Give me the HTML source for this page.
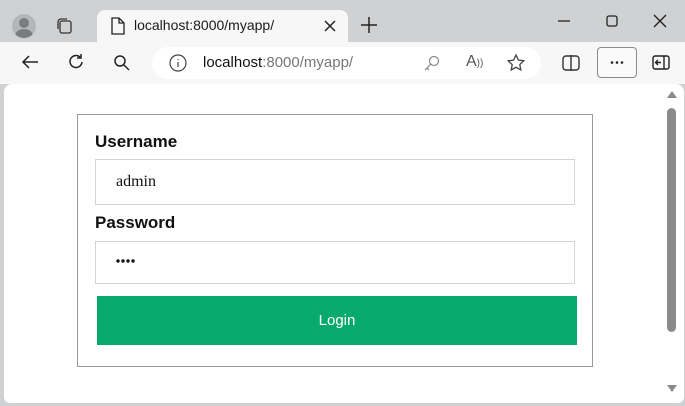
<!DOCTYPE html><html><head><style>
body{margin:0;width:685px;height:406px;overflow:hidden;background:#cfd1d2;font-family:"Liberation Sans",sans-serif;position:relative}
.a{position:absolute}
svg{position:absolute;overflow:visible}
</style></head><body>
<div class="a" style="left:0;top:0;width:685px;height:406px;background:#d0d1d2"></div>
<div class="a" style="left:97px;top:10px;width:251px;height:34px;background:#f7f7f7;border-radius:8px 8px 0 0"></div>
<div class="a" style="left:134px;top:17px;font-size:14px;color:#1a1a1a">localhost:8000/myapp/</div>
<div class="a" style="left:12px;top:14px;width:24px;height:24px;border-radius:50%;background:#b5b6b7;overflow:hidden">
 <div class="a" style="left:7px;top:4px;width:10px;height:10px;border-radius:50%;background:#7b7c7d"></div>
 <div class="a" style="left:3px;top:15px;width:18px;height:14px;border-radius:50%;background:#7b7c7d"></div></div>
<svg style="left:56px;top:17px" width="20" height="20" fill="none" stroke="#333" stroke-width="1.3"><rect x="4" y="4" width="11" height="12" rx="2"/><path d="M2 12V5a3 3 0 0 1 3-3h6"/></svg>
<svg style="left:110px;top:17px" width="16" height="18" fill="none" stroke="#222" stroke-width="1.3"><path d="M2 1h7l5 5v11H2zM9 1v5h5"/></svg>
<svg style="left:324px;top:20px" width="12" height="12" stroke="#222" stroke-width="1.5"><path d="M1 1l10 10M11 1L1 11"/></svg>
<svg style="left:361px;top:17px" width="16" height="16" stroke="#222" stroke-width="1.5"><path d="M8 0v16M0 8h16"/></svg>
<svg style="left:558px;top:20px" width="12" height="2" stroke="#222" stroke-width="1.3"><path d="M0 1h12"/></svg>
<svg style="left:606px;top:15px" width="12" height="12" fill="none" stroke="#222" stroke-width="1.3"><rect x="1" y="1" width="10" height="10" rx="2"/></svg>
<svg style="left:654px;top:15px" width="12" height="12" stroke="#222" stroke-width="1.4"><path d="M0 0l12 12M12 0L0 12"/></svg>
<div class="a" style="left:0;top:42px;width:685px;height:42px;background:#f7f7f7"></div>
<svg style="left:21px;top:54px" width="18" height="16" fill="none" stroke="#222" stroke-width="1.5"><path d="M17 8H2M8 2L2 8l6 6"/></svg>
<svg style="left:67px;top:53px" width="18" height="18" fill="none" stroke="#222" stroke-width="1.5"><path d="M15 9a6 6 0 1 1-2-5M14 1v4h-4"/></svg>
<svg style="left:114px;top:55px" width="16" height="16" fill="none" stroke="#222" stroke-width="1.5"><circle cx="6" cy="6" r="5"/><path d="M10 10l5 5"/></svg>
<div class="a" style="left:152px;top:47px;width:389px;height:32px;background:#fff;border-radius:16px"></div>
<svg style="left:169px;top:54px" width="18" height="18" fill="none" stroke="#444" stroke-width="1.2"><circle cx="9" cy="9" r="8"/><path d="M9 8v5M9 5v1"/></svg>
<div class="a" style="left:203px;top:54px;font-size:15px;color:#111">localhost<span style="color:#777">:8000/myapp/</span></div>
<svg style="left:424px;top:55px" width="16" height="16" fill="none" stroke="#888" stroke-width="1.2"><circle cx="10" cy="6" r="4.5"/><path d="M7 9l-6 6M3 13l2 2"/></svg>
<div class="a" style="left:466px;top:53px;font-size:16px;color:#555">A<span style="font-size:10px">))</span></div>
<svg style="left:507px;top:54px" width="18" height="18" fill="none" stroke="#444" stroke-width="1.3"><path d="M9 1l2.4 5 5.4.7-4 3.8 1 5.4L9 13.3 4.2 16l1-5.4-4-3.8 5.4-.7z"/></svg>
<svg style="left:562px;top:55px" width="18" height="16" fill="none" stroke="#333" stroke-width="1.4"><rect x="1" y="1" width="16" height="14" rx="3"/><path d="M9 0v16"/></svg>
<div class="a" style="left:597px;top:47px;width:38px;height:29px;border:1.5px solid #8a8a8a;border-radius:4px;background:#fafafa"></div>
<svg style="left:610px;top:61px" width="14" height="3" fill="#222"><circle cx="2" cy="1.5" r="1.3"/><circle cx="7" cy="1.5" r="1.3"/><circle cx="12" cy="1.5" r="1.3"/></svg>
<svg style="left:652px;top:55px" width="18" height="15" fill="none" stroke="#222" stroke-width="1.4"><rect x="1" y="1" width="16" height="13" rx="2"/><path d="M12 1v13M9 7.5H4M6 5l-2.5 2.5L6 10"/></svg>
<div class="a" style="left:4px;top:84px;width:680px;height:319px;background:#fff;border-radius:8px 8px 6px 6px"></div>
<div class="a" style="left:667px;top:108px;width:9px;height:224px;background:#8b8b8b;border-radius:5px"></div>
<svg style="left:667px;top:91px" width="10" height="8" fill="#8b8b8b"><path d="M0 7L5 0l5 7z"/></svg>
<svg style="left:667px;top:385px" width="10" height="8" fill="#8b8b8b"><path d="M0 0h10L5 7z"/></svg>
<div class="a" style="left:77px;top:114px;width:514px;height:251px;border:1px solid #9a9a9a"></div>
<div class="a" style="left:95px;top:132px;font-size:17px;font-weight:bold;color:#111">Username</div>
<div class="a" style="left:95px;top:159px;width:478px;height:44px;border:1px solid #d4d4d4"></div>
<div class="a" style="left:116px;top:173px;font-size:16px;font-family:'Liberation Serif',serif;color:#111">admin</div>
<div class="a" style="left:95px;top:213px;font-size:17px;font-weight:bold;color:#111">Password</div>
<div class="a" style="left:95px;top:241px;width:478px;height:41px;border:1px solid #d4d4d4"></div>
<svg style="left:116px;top:259px" width="20" height="4" fill="#111"><circle cx="2" cy="2" r="1.7"/><circle cx="7" cy="2" r="1.7"/><circle cx="12" cy="2" r="1.7"/><circle cx="17" cy="2" r="1.7"/></svg>
<div class="a" style="left:97px;top:296px;width:480px;height:49px;background:#07a96c;color:#fff;font-size:15px;text-align:center;line-height:49px">Login</div>
</body></html>
